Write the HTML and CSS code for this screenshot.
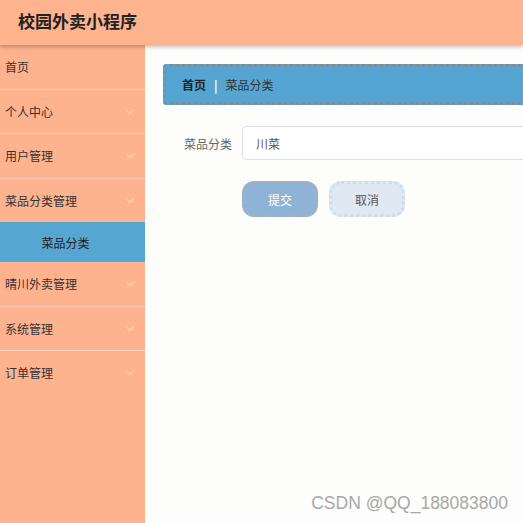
FILE: index.html
```html
<!DOCTYPE html>
<html lang="zh-CN">
<head>
  <meta charset="UTF-8" />
  <meta name="viewport" content="width=device-width, initial-scale=1.0"/>
  <title>校园外卖小程序</title>
  <link rel="stylesheet" href="styles.css">
</head>
<body>

  <header class="topbar">
    <h1>校园外卖小程序</h1>
  </header>

  <div class="layout">
    <aside class="sidebar">
      <div class="menu-item">首页</div>
      <div class="menu-item">个人中心<span class="arrow"></span></div>
      <div class="menu-item">用户管理<span class="arrow"></span></div>
      <div class="menu-item open">菜品分类管理<span class="arrow"></span></div>
      <div class="submenu-item">菜品分类</div>
      <div class="menu-item">晴川外卖管理<span class="arrow"></span></div>
      <div class="menu-item">系统管理<span class="arrow"></span></div>
      <div class="menu-item last">订单管理<span class="arrow"></span></div>
    </aside>

    <main class="content">
      <div class="breadcrumb">
        <span class="crumb-home">首页</span>
        <span class="crumb-sep">|</span>
        <span class="crumb-current">菜品分类</span>
      </div>

      <div class="form">
        <div class="form-row">
          <label for="category">菜品分类</label>
          <input type="text" id="category" value="川菜"/>
        </div>
        <div class="form-actions">
          <button type="submit" class="btn-submit">提交</button>
          <button type="button" class="btn-cancel">取消</button>
        </div>
      </div>
    </main>
  </div>

  <div class="watermark">CSDN @QQ_188083800</div>

</body>
</html>
```

FILE: styles.css
```css
body {
  margin: 0;
  font-family: "Noto Sans CJK SC", "Noto Sans", sans-serif;
  background: #fdfdfb;
  color: #333;
  height: 523px;
  overflow: hidden;
  position: relative;
}

.topbar {
  height: 45px;
  box-sizing: border-box;
  background: #ffb38f;
  box-shadow: 0 2px 4px rgba(0, 0, 0, 0.25);
  display: flex;
  align-items: center;
  padding: 0 0 5px 18px;
  position: relative;
  z-index: 1;
}

.topbar h1 {
  margin: 0;
  font-size: 17px;
  font-weight: bold;
  color: #222;
}

.layout {
  display: flex;
  height: 478px;
}

.sidebar {
  width: 145px;
  flex-shrink: 0;
  background: #ffb28e;
}

.menu-item {
  height: 43.5px;
  border-bottom: 1px solid #ffd3bd;
  display: flex;
  align-items: center;
  justify-content: space-between;
  padding: 0 12px 0 5px;
  font-size: 12px;
  color: #333;
}

.menu-item.open,
.menu-item.last {
  border-bottom: none;
}

.arrow {
  width: 5px;
  height: 5px;
  border-right: 1px solid #ffd9c4;
  border-bottom: 1px solid #ffd9c4;
  transform: rotate(45deg);
  margin-top: -3px;
}

.submenu-item {
  height: 40px;
  background: #56a6d2;
  display: flex;
  align-items: center;
  justify-content: center;
  font-size: 12px;
  color: #222;
  padding-right: 14px;
}

.content {
  flex: 1;
  padding: 19px 0 0 18px;
  overflow: hidden;
}

.breadcrumb {
  width: 420px;
  height: 35px;
  background: #55a5d3;
  border: 3px dotted #7f8d98;
  border-radius: 3px;
  display: flex;
  align-items: center;
  padding-left: 16px;
  font-size: 12px;
}

.crumb-home {
  font-weight: bold;
  color: #222;
}

.crumb-sep {
  color: #fff;
  font-weight: bold;
  margin: 0 8px;
}

.crumb-current {
  color: #333;
}

.form {
  margin-top: 21px;
}

.form-row {
  display: flex;
  align-items: center;
  gap: 10px;
}

.form-row label {
  width: 69px;
  flex-shrink: 0;
  text-align: right;
  font-size: 12px;
  color: #666;
}

.form-row input {
  width: 320px;
  flex-shrink: 0;
  height: 34px;
  box-sizing: border-box;
  border: 1px solid #dcdfe6;
  border-radius: 4px;
  padding: 0 13px;
  font-family: inherit;
  font-size: 12px;
  color: #555;
  background: #fff;
}

.form-actions {
  display: flex;
  gap: 11px;
  margin: 21px 0 0 79px;
}

.form-actions button {
  width: 76px;
  height: 36px;
  border-radius: 12px;
  border: 3px dotted #a3b1bf;
  font-family: inherit;
  font-size: 12px;
  cursor: pointer;
}

.btn-submit {
  background: #8fb3d6;
  color: #fff;
}

.btn-cancel {
  background: #dfe8f3;
  color: #555;
  border-color: #d3dbe4 !important;
}

.watermark {
  position: absolute;
  right: 15px;
  bottom: 9px;
  font-family: "Liberation Sans", sans-serif;
  font-size: 17.5px;
  color: #a8a8a8;
}
```
